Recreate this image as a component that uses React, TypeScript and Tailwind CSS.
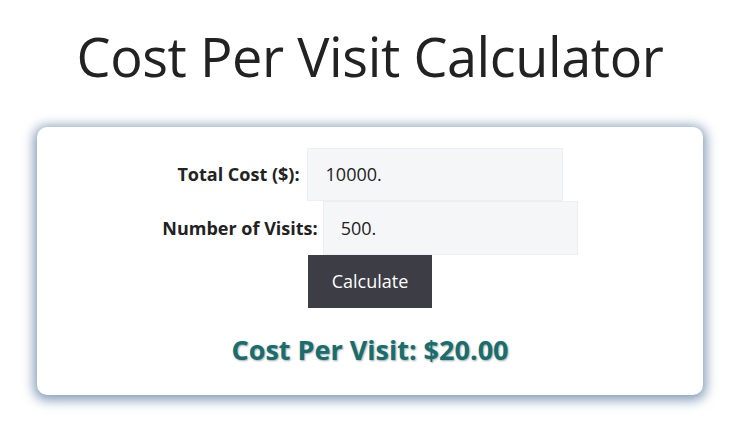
import React from "react";

export default function App() {
  return (
    <div
      className="min-h-[431px] w-full bg-white flex flex-col items-center pl-[6px]"
      style={{ fontFamily: '"Open Sans", "Noto Sans", sans-serif' }}
    >
      <h1 className="mt-[17px] text-[54px] leading-[78px] text-[#222222] font-normal tracking-[-0.4px]">
        Cost Per Visit Calculator
      </h1>
      <div className="mt-[32px] w-[666px] h-[268px] bg-white rounded-[10px] shadow-[0_2px_12px_3px_rgba(60,100,145,0.65)] flex flex-col items-center pt-[21px]">
        <div className="flex items-center">
          <label className="text-[18px] font-bold text-[#222222] mr-[7px]">Total Cost ($):</label>
          <div className="w-[256px] h-[53px] bg-[#f5f6f8] border border-[#eceef0] flex items-center pl-[18px] text-[18px] text-[#222222]">
            10000.
          </div>
        </div>
        <div className="flex items-center">
          <label className="text-[18px] font-bold text-[#222222] mr-[5px]">Number of Visits:</label>
          <div className="w-[255px] h-[54px] bg-[#f5f6f8] border border-[#eceef0] flex items-center pl-[17px] text-[18px] text-[#222222]">
            500.
          </div>
        </div>
        <button className="w-[124px] h-[53px] bg-[#3d3d45] text-white text-[18px]">
          Calculate
        </button>
        <div className="mt-[24px] text-[27px] leading-[36px] font-bold text-[#186e6e] [text-shadow:1px_1px_2px_rgba(0,0,0,0.35)]">
          Cost Per Visit: $20.00
        </div>
      </div>
    </div>
  );
}
